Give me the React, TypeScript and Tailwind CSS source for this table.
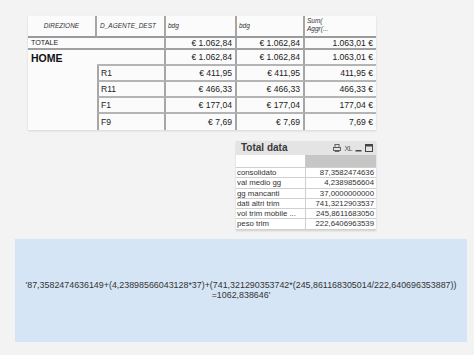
const font = { fontFamily: '"Liberation Sans", Arial, sans-serif' };

const details = [
  { code: 'R1', a: '€ 411,95', b: '€ 411,95', c: '411,95 €' },
  { code: 'R11', a: '€ 466,33', b: '€ 466,33', c: '466,33 €' },
  { code: 'F1', a: '€ 177,04', b: '€ 177,04', c: '177,04 €' },
  { code: 'F9', a: '€ 7,69', b: '€ 7,69', c: '7,69 €' },
];

const totals = [
  ['consolidato', '87,3582474636'],
  ['val medio gg', '4,2389856604'],
  ['gg mancanti', '37,0000000000'],
  ['dati altri trim', '741,3212903537'],
  ['vol trim mobile ...', '245,8611683050'],
  ['peso trim', '222,6406963539'],
];

function PivotTable() {
  const hd = 'border-r-2 border-[#a6a6a6] border-b-2 border-b-[#9a9a9a] text-[6.5px] italic text-[#333] flex items-center';
  const num = 'border-r-2 border-[#a6a6a6] flex items-center justify-end pr-[3px] text-[8.6px] text-[#222]';
  return (
    <div className="ml-[28px] mt-[16px] w-[348px] bg-[#fbfbfb] shadow-[0_1px_2px_rgba(0,0,0,0.12)] grid grid-cols-[69px_69px_71px_68px_71px] grid-rows-[22px_12px_16px_16px_16px_16px_16px]">
      <div className={hd + ' justify-center'}>DIREZIONE</div>
      <div className={hd + ' pl-[3px]'}>D_AGENTE_DEST</div>
      <div className={hd + ' pl-[2px]'}>bdg</div>
      <div className={hd + ' pl-[2px]'}>bdg</div>
      <div className="border-b-2 border-b-[#9a9a9a] text-[6.5px] italic text-[#333] pl-[2px] pt-[1px] leading-[8px]">
        Sum(
        <br />
        Aggr(...
      </div>

      <div className="col-span-2 border-r-2 border-[#a6a6a6] border-b-2 border-b-[#a0a0a0] flex items-center pl-[3px] text-[7.2px] text-[#222]">TOTALE</div>
      <div className={num + ' border-b-2 border-b-[#a0a0a0]'}>€ 1.062,84</div>
      <div className={num + ' border-b-2 border-b-[#a0a0a0]'}>€ 1.062,84</div>
      <div className="border-b-2 border-b-[#a0a0a0] flex items-center justify-end pr-[3px] text-[8.6px] text-[#222]">1.063,01 €</div>

      <div className="row-span-5 pl-[3px] pt-[1px] text-[10.5px] font-bold text-[#111] leading-[14px]">HOME</div>
      <div className="border-r-2 border-[#a6a6a6] border-b-2 border-b-[#b4b4b4]" />
      <div className={num + ' border-b-2 border-b-[#b4b4b4]'}>€ 1.062,84</div>
      <div className={num + ' border-b-2 border-b-[#b4b4b4]'}>€ 1.062,84</div>
      <div className="border-b-2 border-b-[#b4b4b4] flex items-center justify-end pr-[3px] text-[8.6px] text-[#222]">1.063,01 €</div>

      {details.map((d, i) => {
        const bb = i < details.length - 1 ? ' border-b-2 border-b-[#b4b4b4]' : '';
        return [
          <div key={d.code + 'c'} className={'border-l-2 border-r-2 border-[#a6a6a6] flex items-center pl-[2px] text-[8.6px] text-[#222]' + bb}>{d.code}</div>,
          <div key={d.code + 'a'} className={num + bb}>{d.a}</div>,
          <div key={d.code + 'b'} className={num + bb}>{d.b}</div>,
          <div key={d.code + 'd'} className={'flex items-center justify-end pr-[3px] text-[8.6px] text-[#222]' + bb}>{d.c}</div>,
        ];
      })}
    </div>
  );
}

function TotalBox() {
  return (
    <div className="ml-[236px] mt-[11px] w-[140px] shadow-[0_1px_2px_rgba(0,0,0,0.15)]">
      <div className="h-[14px] bg-[#e4e4e4] flex items-center pl-[5px] pr-[3px]">
        <span className="text-[10px] font-bold text-[#3a3a3a] leading-none">Total data</span>
        <div className="ml-auto flex items-center gap-[3px] text-[#555]">
          <svg width="8" height="8" viewBox="0 0 8 8" fill="none" stroke="#555" strokeWidth="0.9">
            <rect x="2" y="0.5" width="4" height="3" />
            <rect x="0.5" y="3.5" width="7" height="3" />
            <path d="M2 6.5v1h4v-1" />
          </svg>
          <span className="text-[7px] leading-none tracking-[-0.5px]">XL</span>
          <svg width="7" height="8" viewBox="0 0 7 8">
            <rect x="0.5" y="6" width="6" height="1.5" fill="#444" />
          </svg>
          <svg width="8" height="8" viewBox="0 0 8 8" fill="none" stroke="#444">
            <rect x="0.5" y="0.5" width="7" height="7" />
            <rect x="0.5" y="0.5" width="7" height="1.5" fill="#444" />
          </svg>
        </div>
      </div>
      <div className="grid grid-cols-[70px_70px] bg-white text-[7.8px] text-[#333]">
        <div className="h-[12px] bg-white border-r border-[#c8c8c8]" />
        <div className="h-[12px] bg-[#c6c6c6]" />
        {totals.map(([k, v]) => [
          <div key={k} className="h-[10.3px] border-t border-r border-[#cfcfcf] pl-[1px] leading-[9px]">{k}</div>,
          <div key={k + 'v'} className="h-[10.3px] border-t border-[#cfcfcf] text-right pr-[2px] leading-[9px]">{v}</div>,
        ])}
      </div>
      <div className="h-px bg-[#cfcfcf]" />
    </div>
  );
}

export default function App() {
  return (
    <div className="w-[474px] h-[355px] bg-[#f3f3f3] flex flex-col overflow-hidden" style={font}>
      <PivotTable />
      <TotalBox />
      <div className="ml-[15px] mt-[9px] w-[452px] h-[103px] bg-[#d5e5f5] flex items-center justify-center text-center text-[8.9px] leading-[10px] text-[#333]">
        <p>
          '87,3582474636149+(4,23898566043128*37)+(741,321290353742*(245,861168305014/222,640696353887))
          <br />
          =1062,838646'
        </p>
      </div>
    </div>
  );
}
